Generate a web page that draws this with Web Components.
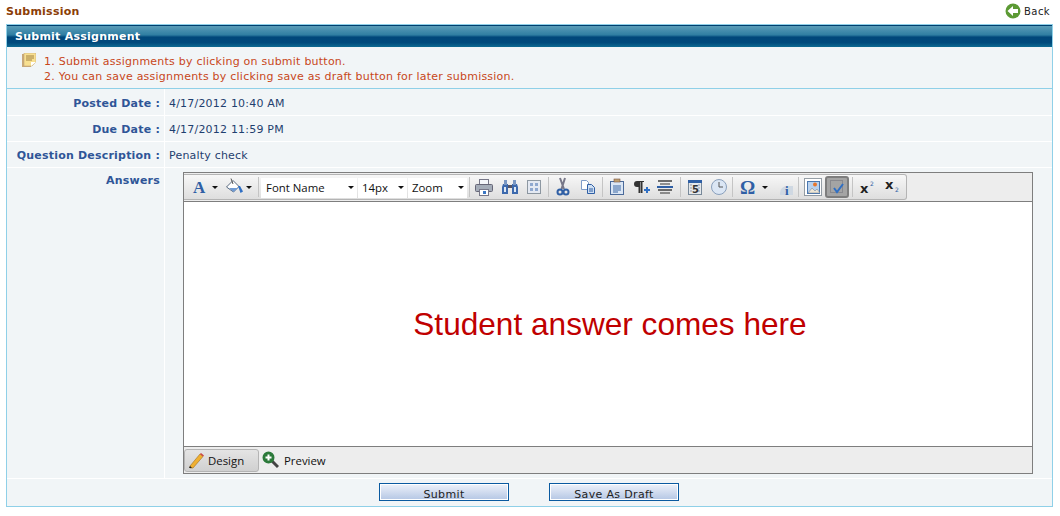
<!DOCTYPE html>
<html>
<head>
<meta charset="utf-8">
<style>
  html, body { margin: 0; background: #fff; }
  body { width: 1060px; height: 516px; overflow: hidden; font: 11px "DejaVu Sans", sans-serif; }
</style>
</head>
<body>
<sub-page>
  <sub-header title="Submission"></sub-header>
  <sub-panel heading="Submit Assignment">
    <sub-notes>
      <div>1. Submit assignments by clicking on submit button.</div>
      <div>2. You can save assignments by clicking save as draft button for later submission.</div>
    </sub-notes>
    <sub-row label="Posted Date :" first>4/17/2012 10:40 AM</sub-row>
    <sub-row label="Due Date :">4/17/2012 11:59 PM</sub-row>
    <sub-row label="Question Description :">Penalty check</sub-row>
    <sub-row label="Answers" tall>
      <sub-editor>Student answer comes here</sub-editor>
    </sub-row>
    <sub-actions>
      <sub-button>Submit</sub-button>
      <sub-button>Save As Draft</sub-button>
    </sub-actions>
  </sub-panel>
</sub-page>

<script>
// Toolbar glyphs, all 20x20 boxes
const ICONS = {
  font: `<text x="2" y="16" font-family="Liberation Serif" font-weight="bold" font-size="17" fill="#2f5fa5">A</text>`,
  fill: `<path d="M1.500 10 8 3.500l6 6-5.500 5.500z" fill="#fff" stroke="#5a6a80"/><path d="M4 11h9l-4.500 4z" fill="#6f9bd4"/><path d="M6 1.500 8 7" stroke="#555"/><path d="M13 9h2l3 5.500-2.500 1.500z" fill="#2f6fc4"/>`,
  print: `<rect x="5.500" y="2.500" width="9" height="5" fill="#f4f6fa" stroke="#778"/><rect x="1.500" y="7.500" width="17" height="7" rx="1" fill="#a4acb8" stroke="#667"/><rect x="5.500" y="12.500" width="9" height="6" fill="#fff" stroke="#778"/><rect x="9" y="14" width="3" height="3" fill="#3d78c4"/>`,
  find: `<path d="M3 7h5v10H2V10zM12 7h5l1 3v7h-6z" fill="#3c69ad"/><rect x="4" y="3" width="3" height="5" fill="#7a98c4"/><rect x="13" y="3" width="3" height="5" fill="#7a98c4"/><rect x="8" y="8" width="4" height="3" fill="#556"/><rect x="4" y="10" width="2" height="5" fill="#dde8f4"/><rect x="14" y="10" width="2" height="5" fill="#dde8f4"/>`,
  select: `<rect x="3.500" y="3.500" width="13" height="13" fill="#e4e9f2" stroke="#345" stroke-dasharray="1 1"/><path d="M6 6h3v3H6zM11 6h3v3h-3zM6 11h3v3H6zM11 11h3v3h-3z" fill="#8fa8cf"/>`,
  cut: `<path d="M7 1l4 11M12 1L8.500 12" stroke="#778" stroke-width="2"/><circle cx="7" cy="15" r="2.500" fill="none" stroke="#2f5fa5" stroke-width="2"/><circle cx="13" cy="15" r="2.500" fill="none" stroke="#2f5fa5" stroke-width="2"/>`,
  copy: `<path d="M3.500 3.500h5l2 2v7h-7z" fill="#fff" stroke="#7f9cc8"/><path d="M9.500 7.500h4l3 3v6h-7z" fill="#cfdff2" stroke="#2f5fa5"/><path d="M11 12h4M11 14h4" stroke="#2f5fa5"/>`,
  paste: `<rect x="3.500" y="4.500" width="13" height="13" fill="#dbe6f4" stroke="#4a6a9a"/><rect x="7" y="2" width="6" height="3" fill="#c0a070" stroke="#754" stroke-width=".6"/><path d="M6 9h8M6 11h8M6 13h8M6 15h5" stroke="#3d68a4"/>`,
  para: `<path d="M10 16V4h1.500v12zM7.500 16V10H6a3 3 0 0 1 0-6h7v1h-3.500v11z" fill="#333"/><path d="M13 13h6M16 10v6" stroke="#2f6fc4" stroke-width="2"/>`,
  align: `<path d="M3 4h14" stroke="#333" stroke-width="1.400"/><path d="M5 7h10" stroke="#333"/><path d="M2 10h16" stroke="#2f5fa5" stroke-width="2"/><path d="M3 13h14" stroke="#333" stroke-width="1.400"/><path d="M5 16h10" stroke="#333"/>`,
  date: `<rect x="3.500" y="3.500" width="13" height="14" fill="#e4e8ec" stroke="#789"/><rect x="3" y="3" width="14" height="3" fill="#2f5fa5"/><path d="M5 8h2M5 11h2M5 14h2M13 8h2M13 11h2M13 14h2" stroke="#99a"/><text x="7" y="16" font-size="10" font-weight="bold" font-family="DejaVu Sans" fill="#333">5</text>`,
  clock: `<circle cx="10" cy="10" r="7.500" fill="#dbe6f4" stroke="#8aa0bc"/><path d="M10 5v5h4" stroke="#555" fill="none"/>`,
  omega: `<text x="1" y="17" font-family="Liberation Serif" font-weight="bold" font-size="19" fill="#2f5fa5">Ω</text>`,
  info: `<path d="M3 18v-2a7 7 0 0 1 7-7h6v9z" fill="#cfd8e2"/><text x="8" y="18" font-family="Liberation Serif" font-weight="bold" font-size="13" fill="#2f5fa5">i</text>`,
  image: `<rect x="1.500" y="1.500" width="17" height="17" fill="#fff" stroke="#345" stroke-dasharray="1 1"/><rect x="4.500" y="4.500" width="12" height="12" fill="#b9d2ee" stroke="#4a78b0"/><circle cx="12" cy="7.500" r="2" fill="#e8762c"/><path d="M5 16l4-5 3 3 2-2 3 4z" fill="#eee6d4" stroke="#6a7a90" stroke-width=".5"/>`,
  check: `<rect x="3.500" y="3.500" width="12" height="12" fill="none" stroke="#445" stroke-opacity=".55" stroke-dasharray="1 1"/><path d="M7 11l3 4 6-8" fill="none" stroke="#2f6fc4" stroke-width="2"/>`,
  sup: `<text x="2" y="16" font-family="DejaVu Sans" font-weight="bold" font-size="13" fill="#222">x</text><text x="12" y="9" font-family="DejaVu Sans" font-size="6" fill="#2f5fa5">2</text>`,
  sub: `<text x="2" y="12" font-family="DejaVu Sans" font-weight="bold" font-size="13" fill="#222">x</text><text x="12" y="15" font-family="DejaVu Sans" font-size="6" fill="#2f5fa5">2</text>`
};

class SubPage extends HTMLElement {
  constructor() {
    super();
    this.attachShadow( {mode: 'open'} ).innerHTML = `
      <style>
        :host { display: flex; flex-direction: column; box-sizing: border-box; width: 1054px; margin-left: 6px; }
      </style>
      <slot></slot>`;
  }
}

class SubHeader extends HTMLElement {
  constructor() {
    super();
    this.attachShadow( {mode: 'open'} ).innerHTML = `
      <style>
        :host { display: flex; justify-content: space-between; align-items: center; height: 24px; box-sizing: border-box; padding: 0 10px 2px 0; }
        .title { font: bold 11px "DejaVu Sans", sans-serif; letter-spacing: .25px; color: #8b3d07; }
        .back { display: flex; align-items: center; gap: 3px; font: 10px "DejaVu Sans", sans-serif; letter-spacing: .4px; color: #222; }
        svg { display: block; }
      </style>
      <span class="title"></span>
      <span class="back">
        <svg width="16" height="16" viewBox="0 0 16 16">
          <circle cx="8" cy="8" r="7.500" fill="#5c9a34"/>
          <path d="M2.500 8 8 3v3h5v4H8v3z" fill="#fff"/>
        </svg>
        Back
      </span>`;
    this.shadowRoot.querySelector( '.title' ).textContent = this.getAttribute( 'title' );
  }
}

class SubPanel extends HTMLElement {
  constructor() {
    super();
    this.attachShadow( {mode: 'open'} ).innerHTML = `
      <style>
        :host { display: flex; flex-direction: column; box-sizing: border-box; width: 1047px; height: 483px; border: 1px solid #8fd0e8; background: #f1f5f7; }
        .bar {
          height: 22px; flex: none; box-sizing: border-box; padding: 1px 8px 0; display: flex; align-items: center;
          font: bold 11px "DejaVu Sans", sans-serif; letter-spacing: .25px; color: #fff;
          background: linear-gradient( #003f6e 0, #003f6e 1px, #5a9cb8 1px, #2f7ea2 45%, #00477a 55%, #004a7c 80%, #0d6a92 100% );
        }
      </style>
      <div class="bar"></div>
      <slot></slot>`;
    this.shadowRoot.querySelector( '.bar' ).textContent = this.getAttribute( 'heading' );
  }
}

class SubNotes extends HTMLElement {
  constructor() {
    super();
    this.attachShadow( {mode: 'open'} ).innerHTML = `
      <style>
        :host { display: flex; flex: none; height: 42px; box-sizing: border-box; padding: 7px 0 0 15px; gap: 8px; border-bottom: 1px solid #8fd0e8; font: 11px/15px "DejaVu Sans", sans-serif; letter-spacing: .23px; color: #c8471a; }
        svg { flex: none; margin-top: -1px; }
      </style>
      <svg width="14" height="14" viewBox="0 0 14 14">
        <path d="M0 1h2v12h7v1H0z" fill="#c8a878"/>
        <path d="M2 0h12v9l-4 4H2z" fill="#f8e090" stroke="#c8a878" stroke-width=".6"/>
        <path d="M4 3h8M4 5h8M4 7h6" stroke="#8a6a30" stroke-width=".8"/>
        <path d="M9 13V9h5z" fill="#fff"/>
      </svg>
      <div><slot></slot></div>`;
  }
}

class SubRow extends HTMLElement {
  constructor() {
    super();
    this.attachShadow( {mode: 'open'} ).innerHTML = `
      <style>
        :host { display: grid; grid-template-columns: 158px 1fr; height: 26px; box-sizing: border-box; border-bottom: 1px solid #fff; font: 11px "DejaVu Sans", sans-serif; letter-spacing: .2px; color: #1f3f6f; flex: none; }
        :host( [first] ) { height: 27px; }
        :host( [tall] ) { height: 311px; }
        .label { font-weight: bold; color: #2f5597; padding: 1px 4px 0 0; display: flex; align-items: center; justify-content: flex-end; border-right: 1px solid #fff; }
        .value { padding: 1px 0 0 4px; display: flex; align-items: center; }
        :host( [first] ) .label, :host( [first] ) .value { padding-top: 2px; }
        :host( [tall] ) .label { align-items: flex-start; padding-top: 6px; }
        :host( [tall] ) .value { align-items: flex-start; padding: 4px 0 0 18px; }
      </style>
      <div class="label"></div>
      <div class="value"><slot></slot></div>`;
    this.shadowRoot.querySelector( '.label' ).textContent = this.getAttribute( 'label' );
  }
}

class SubTool extends HTMLElement {
  constructor() {
    super();
    this.attachShadow( {mode: 'open'} ).innerHTML = `
      <style>
        :host { display: flex; align-items: center; justify-content: center; width: 24px; height: 24px; box-sizing: border-box; flex: none; }
        :host( [active] ) { height: 22px; background: #a4a4a4; border: 2px solid #7d7d7d; border-radius: 3px; }
        :host( [menu] ) { width: 34px; justify-content: flex-start; padding-left: 3px; gap: 1px; }
        .caret { width: 0; height: 0; border: 3px solid transparent; border-top: 3px solid #111; border-bottom: 0; }
        svg { display: block; }
      </style>
      <svg width="20" height="20" viewBox="0 0 20 20">${ICONS[this.getAttribute( 'icon' )]}</svg>
      ${this.hasAttribute( 'menu' ) ? '<span class="caret"></span>' : ''}`;
  }
}

class SubCombo extends HTMLElement {
  constructor() {
    super();
    this.attachShadow( {mode: 'open'} ).innerHTML = `
      <style>
        :host { display: flex; align-items: center; justify-content: space-between; height: 20px; margin-top: 1px; box-sizing: border-box; padding: 0 3px 0 4px; background: #fff; font: 11.4px "Open Sans", sans-serif; color: #111; flex: none; }
        .caret { width: 0; height: 0; border: 3px solid transparent; border-top: 3px solid #111; border-bottom: 0; }
      </style>
      <span><slot></slot></span><span class="caret"></span>`;
  }
}

class SubEditor extends HTMLElement {
  constructor() {
    super();
    this.attachShadow( {mode: 'open'} ).innerHTML = `
      <style>
        :host { display: flex; flex-direction: column; box-sizing: border-box; width: 850px; height: 302px; border: 1px solid #7e7e7e; background: #ededed; font-family: "Open Sans", sans-serif; letter-spacing: 0; }
        .top { height: 29px; flex: none; box-sizing: border-box; padding-top: 1px; border-bottom: 1px solid #7e7e7e; }
        .tools {
          display: inline-flex; align-items: center; height: 26px; box-sizing: border-box; padding: 0 1px 0 4px;
          border: 1px solid #b4b4b4; border-left: 0; border-radius: 0 3px 3px 0;
          background: linear-gradient( #f7f7f7, #dedede );
        }
        .sep { width: 1px; height: 20px; background: #c4c4c4; margin: 0 2px; flex: none; }
        .area { flex: 1; background: #fff; display: flex; align-items: center; justify-content: center; padding-left: 4px; font: 31.6px "Liberation Sans", sans-serif; color: #c00000; }
        .bottom { height: 27px; flex: none; box-sizing: border-box; border-top: 1px solid #7e7e7e; display: flex; align-items: center; font-size: 11.4px; color: #111; }
        .tab { display: flex; align-items: center; gap: 4px; height: 23px; box-sizing: border-box; }
        .tab.on { width: 75px; padding-left: 3px; background: linear-gradient( #e4e4e4, #d0d0d0 ); border: 1px solid #b4b4b4; border-radius: 3px; }
        .tab.off { padding-left: 3px; gap: 5px; }
        svg { display: block; }
      </style>
      <div class="top">
        <div class="tools">
          <sub-tool icon="font" menu></sub-tool>
          <sub-tool icon="fill" menu></sub-tool>
          <span class="sep"></span>
          <sub-combo style="width:96px;padding-left:5px">Font Name</sub-combo>
          <sub-combo style="width:49px;margin-left:1px">14px</sub-combo>
          <sub-combo style="width:59px;margin-left:1px">Zoom</sub-combo>
          <span class="sep"></span>
          <sub-tool icon="print" style="margin-right:2px"></sub-tool>
          <sub-tool icon="find"></sub-tool>
          <sub-tool icon="select"></sub-tool>
          <span class="sep"></span>
          <sub-tool icon="cut" style="margin-right:1px"></sub-tool>
          <sub-tool icon="copy"></sub-tool>
          <span class="sep"></span>
          <sub-tool icon="paste"></sub-tool>
          <sub-tool icon="para"></sub-tool>
          <sub-tool icon="align"></sub-tool>
          <span class="sep" style="margin:0 2px 0 3px"></span>
          <sub-tool icon="date" style="width:23px;margin-right:1px"></sub-tool>
          <sub-tool icon="clock" style="width:23px"></sub-tool>
          <span class="sep" style="margin:0 3px 0 2px"></span>
          <sub-tool icon="omega" menu style="width:39px;gap:3px"></sub-tool>
          <sub-tool icon="info" style="margin-right:-3px"></sub-tool>
          <span class="sep"></span>
          <sub-tool icon="image"></sub-tool>
          <sub-tool icon="check" active></sub-tool>
          <span class="sep" style="margin:0 3px"></span>
          <sub-tool icon="sup"></sub-tool>
          <sub-tool icon="sub" style="width:25px"></sub-tool>
        </div>
      </div>
      <div class="area"><slot></slot></div>
      <div class="bottom">
        <div class="tab on">
          <svg width="16" height="18" viewBox="0 0 16 18">
            <path d="M2 15 12 3l3 2.500L5 17H2z" fill="#f0b030" stroke="#a07020" stroke-width=".6"/>
            <path d="M12 3l1-1 3 2.500-1 1z" fill="#c44"/>
            <path d="M1 17l1-2 2 2z" fill="#222"/>
          </svg>
          Design
        </div>
        <div class="tab off">
          <svg width="17" height="18" viewBox="0 0 17 18">
            <path d="M10 10l6 6" stroke="#444" stroke-width="3"/>
            <circle cx="6.500" cy="6.500" r="5" fill="#2c7a3a" stroke="#2c7a3a" stroke-width="2"/>
            <path d="M6.500 3.500v6M3.500 6.500h6" stroke="#fff" stroke-width="2"/>
          </svg>
          Preview
        </div>
      </div>`;
  }
}

class SubActions extends HTMLElement {
  constructor() {
    super();
    this.attachShadow( {mode: 'open'} ).innerHTML = `
      <style>
        :host { display: flex; justify-content: center; gap: 40px; flex: 1; padding: 4px 1px 0 0; box-sizing: border-box; }
      </style>
      <slot></slot>`;
  }
}

class SubButton extends HTMLElement {
  constructor() {
    super();
    this.attachShadow( {mode: 'open'} ).innerHTML = `
      <style>
        :host {
          display: flex; align-items: center; justify-content: center; width: 130px; height: 18px; box-sizing: border-box; padding-top: 4px;
          border: 1px solid #0a5aa0; box-shadow: inset 0 0 0 1px #fff; background: linear-gradient( #eef2fa, #b4c6e4 );
          font: 11px "DejaVu Sans", sans-serif; letter-spacing: .35px; color: #222;
        }
      </style>
      <slot></slot>`;
  }
}

customElements.define( 'sub-page', SubPage );
customElements.define( 'sub-header', SubHeader );
customElements.define( 'sub-panel', SubPanel );
customElements.define( 'sub-notes', SubNotes );
customElements.define( 'sub-row', SubRow );
customElements.define( 'sub-tool', SubTool );
customElements.define( 'sub-combo', SubCombo );
customElements.define( 'sub-editor', SubEditor );
customElements.define( 'sub-actions', SubActions );
customElements.define( 'sub-button', SubButton );
</script>
</body>
</html>
